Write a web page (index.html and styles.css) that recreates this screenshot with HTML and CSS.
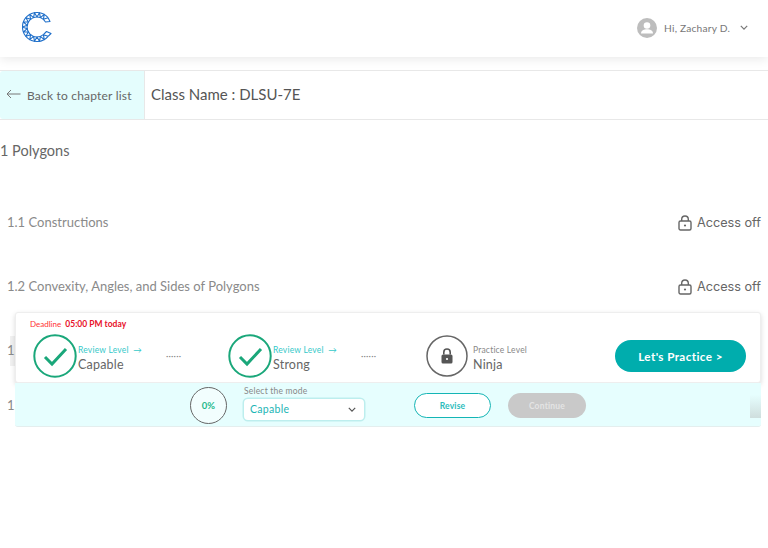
FILE: index.html
```html
<!DOCTYPE html>
<html lang="en">
<head>
<meta charset="utf-8">
<title>Chapter</title>
<link rel="stylesheet" href="styles.css">
</head>
<body>
<header class="topbar">
  <svg class="logo" viewBox="0 0 32 34" width="32" height="34">
    <g fill="none" stroke="#1f6fc9" stroke-width="1.100" stroke-linejoin="round">
      <polyline points="26.100,7.700 21.400,9.300 22.250,4.400 18.400,7.600 17.500,2.700 15,7 12.500,2.700 11.600,7.600 7.750,4.400 8.600,9.300 3.900,7.700 6.300,12 1.400,12 5.200,15.300 0.500,17 5.200,18.700 1.400,22 6.300,22 3.900,26.300 8.600,24.700 7.750,29.600 11.600,26.400 12.500,31.300 15,27 17.500,31.300 18.400,26.400 22.250,29.600 21.400,24.700 26.100,26.300"/>
      <path d="M26.100 7.700A14.500 14.500 0 1 0 26.100 26.300"/>
      <path d="M21.400 9.300A10 10 0 1 0 21.400 24.700"/>
      <path d="M26.100 7.700L28 11.500 23.500 12 21.400 9.300M26.100 26.300L29 23.500 24.500 21.500 21.400 24.700"/>
    </g>
  </svg>
  <div class="user">
    <svg class="avatar" viewBox="0 0 20 20" width="20" height="20">
      <circle cx="10" cy="10" r="10" fill="#bdbdbd"/>
      <circle cx="10" cy="7.500" r="3.300" fill="#fff"/>
      <path d="M4 15.500c0-3 3-4.200 6-4.200s6 1.200 6 4.200z" fill="#fff"/>
    </svg>
    <span class="user-name">Hi, Zachary D.</span>
    <svg class="chev" viewBox="0 0 10 6" width="8" height="5"><path d="M1 1l4 4 4-4" fill="none" stroke="#777" stroke-width="1.500"/></svg>
  </div>
</header>

<main class="page">
  <section class="classbar">
    <a class="back">
      <svg viewBox="0 0 15 10" width="15" height="10"><path d="M14.500 5H1M5 1L1 5l4 4" fill="none" stroke="#777" stroke-width="1"/></svg>
      <span>Back to chapter list</span>
    </a>
    <h1 class="class-name">Class Name : DLSU-7E</h1>
  </section>

  <h2 class="chapter">1 Polygons</h2>

  <ul class="topics">
    <li class="topic">
      <span>1.1 Constructions</span>
      <span class="access">
        <svg viewBox="0 0 14 16" width="14" height="16"><rect x="1" y="6" width="12" height="9" rx="1.500" fill="none" stroke="#666" stroke-width="1.400"/><path d="M3.700 6V4.300a3.300 3.300 0 0 1 6.600 0V6" fill="none" stroke="#666" stroke-width="1.400"/><circle cx="7" cy="10.500" r="1.100" fill="#666"/></svg>
        <span class="access-text">Access off</span>
      </span>
    </li>
    <li class="topic">
      <span>1.2 Convexity, Angles, and Sides of Polygons</span>
      <span class="access">
        <svg viewBox="0 0 14 16" width="14" height="16"><rect x="1" y="6" width="12" height="9" rx="1.500" fill="none" stroke="#666" stroke-width="1.400"/><path d="M3.700 6V4.300a3.300 3.300 0 0 1 6.600 0V6" fill="none" stroke="#666" stroke-width="1.400"/><circle cx="7" cy="10.500" r="1.100" fill="#666"/></svg>
        <span class="access-text">Access off</span>
      </span>
    </li>
    <li class="topic topic-covered topic-shaded"><span>1.3</span></li>
    <li class="topic topic-covered"><span>1.4</span></li>
  </ul>

  <section class="popup">
    <div class="levels">
      <p class="deadline">Deadline <strong>05:00 PM today</strong></p>
      <div class="level-row">
        <div class="level level-a">
          <svg class="ring" viewBox="0 0 44 44" width="44" height="44"><circle cx="22" cy="22" r="20.700" fill="none" stroke="#1aa77a" stroke-width="2"/><path d="M12 23l7 7 14-15" fill="none" stroke="#1aa77a" stroke-width="3"/></svg>
          <div class="level-text"><span class="level-label active">Review Level &nbsp;→</span><span class="level-name">Capable</span></div>
        </div>
        <span class="dots">······</span>
        <div class="level level-b">
          <svg class="ring" viewBox="0 0 44 44" width="44" height="44"><circle cx="22" cy="22" r="20.700" fill="none" stroke="#1aa77a" stroke-width="2"/><path d="M12 23l7 7 14-15" fill="none" stroke="#1aa77a" stroke-width="3"/></svg>
          <div class="level-text"><span class="level-label active">Review Level &nbsp;→</span><span class="level-name">Strong</span></div>
        </div>
        <span class="dots">······</span>
        <div class="level level-c">
          <svg class="ring" viewBox="0 0 42 42" width="42" height="42"><circle cx="21" cy="21" r="20" fill="none" stroke="#666" stroke-width="1.500"/><rect x="15.500" y="19.500" width="11" height="9" rx="1.500" fill="#555"/><path d="M17.800 19.500v-2.300a3.200 3.200 0 0 1 6.400 0v2.300" fill="none" stroke="#555" stroke-width="1.600"/><circle cx="21" cy="24" r="1.100" fill="#fff"/></svg>
          <div class="level-text"><span class="level-label">Practice Level</span><span class="level-name">Ninja</span></div>
        </div>
        <button class="practice">Let's Practice &gt;</button>
      </div>
    </div>
    <div class="mode">
      <div class="percent">0%</div>
      <div class="select-wrap">
        <span class="select-label">Select the mode</span>
        <div class="select"><span>Capable</span><svg viewBox="0 0 10 6" width="8" height="5"><path d="M1 1l4 4 4-4" fill="none" stroke="#555" stroke-width="1.500"/></svg></div>
      </div>
      <button class="revise">Revise</button>
      <button class="continue">Continue</button>
    </div>
  </section>
</main>
</body>
</html>
```
FILE: styles.css
```css
* { box-sizing: border-box; }
html, body { margin: 0; padding: 0; }
body {
  width: 768px;
  height: 548px;
  overflow: hidden;
  background: #fff;
  font-family: "Lato", "Noto Sans", sans-serif;
  color: #666;
}
.topbar {
  height: 57px;
  display: flex;
  align-items: center;
  justify-content: space-between;
  padding: 0 20px 2px 22px;
  background: #fff;
  box-shadow: 0 2px 10px rgba(0,0,0,.09);
}
.logo { display: block; margin-bottom: 1px; }
.user { display: flex; align-items: center; gap: 7px; }
.user-name { font-size: 10.200px; color: #777; letter-spacing: .2px; margin-right: 3px; }
.page { position: relative; }
.classbar {
  margin-top: 13px;
  height: 50px;
  display: flex;
  align-items: stretch;
  border-top: 1px solid #e8e8e8;
  border-bottom: 1px solid #e8e8e8;
}
.back {
  width: 145px;
  display: flex;
  align-items: center;
  gap: 6px;
  padding: 0 0 0 6px;
  background: #e4fdfd;
  border-right: 1px solid #e8e8e8;
  border-radius: 3px 0 0 3px;
  font-size: 12px;
  color: #666;
  letter-spacing: .2px;
}
.back svg { margin-top: -3px; }
.class-name {
  margin: 0;
  padding: 0 0 2px 6px;
  align-self: center;
  font-size: 15px;
  font-weight: 400;
  color: #555;
}
.chapter {
  margin: 21px 0 0;
  height: 20px;
  line-height: 20px;
  font-size: 14.500px;
  font-weight: 400;
  color: #666;
}
.topics { list-style: none; margin: 0; padding: 37px 0 0 7px; }
.topic {
  position: relative;
  height: 64px;
  display: flex;
  align-items: flex-start;
  justify-content: space-between;
  padding: 15px 7px 0 0;
  font-size: 13px;
  line-height: 18px;
  color: #8a8a8a;
}
.topic-covered { height: 55px; }
.topic-shaded::before {
  content: "";
  position: absolute;
  left: 3px;
  top: 10px;
  width: 5px;
  height: 30px;
  background: #f1f1f1;
  z-index: -1;
}
.access {
  display: flex;
  align-items: center;
  gap: 5px;
  font-family: "Inter", sans-serif;
  font-size: 12.700px;
  color: #666;
}
.access-text { padding-top: 1px; }
.popup {
  position: absolute;
  left: 15px;
  top: 242px;
  width: 746px;
}
.levels {
  height: 71px;
  padding: 6px 14px 0 14px;
  background: #fff;
  border: 1px solid #eee;
  border-radius: 3px;
  box-shadow: 0 2px 5px rgba(0,0,0,.15);
  position: relative;
}
.deadline { margin: 0; font-size: 8px; line-height: 11px; color: #f33; }
.deadline strong { margin-left: 2px; color: #e8102a; font-weight: 700; font-size: 8.500px; }
.level-row { display: flex; align-items: center; margin-top: 2px; margin-left: 3px; height: 47px; }
.level { display: flex; align-items: center; gap: 1px; flex: none; }
.level-a { width: 133px; }
.level-b { width: 133px; margin-left: 42px; }
.level-c { margin-left: 45px; gap: 5px; width: 189px; }
.dots { font-size: 9px; color: #888; width: 20px; flex: none; letter-spacing: .2px; }
.level-text { display: flex; flex-direction: column; padding-top: 6px; }
.level-label { font-size: 8.500px; line-height: 11px; color: #888; letter-spacing: .2px; }
.level-label.active { color: #35c9c9; }
.level-name { font-size: 12.500px; line-height: 17px; color: #666; letter-spacing: .2px; }
.practice {
  flex: none;
  width: 131px;
  height: 32px;
  border: 0;
  border-radius: 16px;
  background: #00adad;
  color: #fff;
  font: 700 11.700px "Lato", sans-serif;
  letter-spacing: .4px;
}
.mode {
  height: 44px;
  padding-top: 2px;
  display: flex;
  align-items: center;
  background: #e6fefe;
  border-bottom: 1px solid #e4eeee;
  border-radius: 0 0 3px 3px;
  position: relative;
}
.mode::after {
  content: "";
  position: absolute;
  right: 0;
  top: 2px;
  bottom: 8px;
  width: 11px;
  background: linear-gradient(#e6fefe 30%, #cfdedd);
}
.percent {
  width: 37px;
  height: 37px;
  margin-left: 175px;
  border: 1.500px solid #666;
  border-radius: 50%;
  display: flex;
  align-items: center;
  justify-content: center;
  background: #f2fefe;
  font-size: 9.500px;
  font-weight: 700;
  color: #1fb98b;
}
.select-wrap { margin-left: 17px; display: flex; flex-direction: column; margin-top: -6px; }
.select-label { font-size: 8.500px; line-height: 11px; color: #888; letter-spacing: .2px; margin-bottom: 2px; }
.select {
  width: 120px;
  height: 21px;
  display: flex;
  align-items: center;
  justify-content: space-between;
  padding: 0 8px 0 6px;
  background: #fff;
  border-radius: 4px;
  box-shadow: 0 0 0 1.500px #bdeeee;
  font-size: 10.500px;
  color: #1bb5b5;
  letter-spacing: .3px;
}
.revise, .continue {
  height: 25px;
  border-radius: 13px;
  font: 700 8.500px "Lato", sans-serif;
  letter-spacing: .2px;
}
.revise { width: 77px; margin-left: 50px; border: 1.500px solid #14b5b5; background: #fff; color: #2cbcbc; }
.continue { width: 78px; margin-left: 17px; border: 0; background: #c9c9c9; color: #e4e4e4; }
```
